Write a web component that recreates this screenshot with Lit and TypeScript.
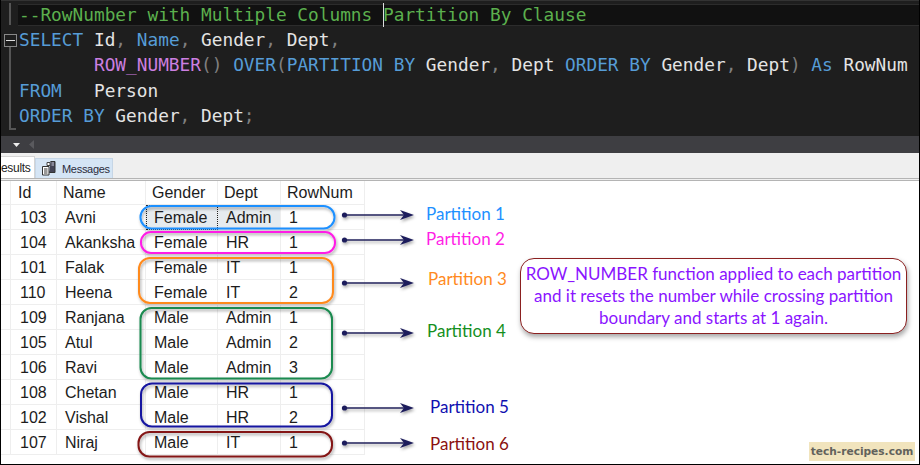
import { LitElement, html, css, svg } from "lit";
import { customElement } from "lit/decorators.js";

const ROWS = [
  ["103", "Avni", "Female", "Admin", "1"],
  ["104", "Akanksha", "Female", "HR", "1"],
  ["101", "Falak", "Female", "IT", "1"],
  ["110", "Heena", "Female", "IT", "2"],
  ["109", "Ranjana", "Male", "Admin", "1"],
  ["105", "Atul", "Male", "Admin", "2"],
  ["106", "Ravi", "Male", "Admin", "3"],
  ["108", "Chetan", "Male", "HR", "1"],
  ["102", "Vishal", "Male", "HR", "2"],
  ["107", "Niraj", "Male", "IT", "1"],
];
const HEAD = ["Id", "Name", "Gender", "Dept", "RowNum"];

const BOXES = [
  { x: 140.5, y: 206, w: 194, h: 22.5, r: 11, c: "#1e90ff" },
  { x: 141, y: 232, w: 194, h: 21, r: 10, c: "#ff1ee6" },
  { x: 139, y: 258, w: 194, h: 45, r: 11, c: "#ff8a1e" },
  { x: 140.5, y: 308, w: 191.5, h: 70.5, r: 11, c: "#1a8a50" },
  { x: 141, y: 383.5, w: 191, h: 43, r: 11, c: "#1616a0" },
  { x: 138.5, y: 432, w: 193.5, h: 24.5, r: 11, c: "#841818" },
];
const ARROWS = [215, 240, 283, 333, 408, 443];
const LABELS = [
  { t: "Partition 1", x: 426, y: 214, c: "#1e90ff" },
  { t: "Partition 2", x: 426, y: 239, c: "#ff1ee6" },
  { t: "Partition 3", x: 428, y: 279, c: "#ff8a1e" },
  { t: "Partition 4", x: 427, y: 331, c: "#158f1e" },
  { t: "Partition 5", x: 430, y: 407, c: "#1010b0" },
  { t: "Partition 6", x: 430, y: 444, c: "#8b1010" },
];

@customElement("app-root")
export class AppRoot extends LitElement {
  static styles = css`
    :host {
      display: block;
      position: relative;
      width: 920px;
      height: 465px;
      overflow: hidden;
      background: #fff;
      box-sizing: border-box;
      border-left: 1px solid #000;
      border-right: 1px solid #000;
      border-bottom: 1px solid #000;
      font-family: "Liberation Sans", Arial, sans-serif;
    }
    .editor {
      height: 136px;
      box-sizing: border-box;
      background: #1e1e1e;
      border-top: 1px solid #333;
      padding-top: 4px;
      display: flex;
      font-family: "DejaVu Sans Mono", monospace;
      font-size: 17.8px;
      color: #e4e4e4;
    }
    .gutter {
      width: 17px;
      flex: none;
      display: flex;
      flex-direction: column;
      align-items: flex-start;
      padding-left: 8px;
      box-sizing: border-box;
    }
    .g1 { width: 2px; height: 22px; margin-top: -2px; background: #555; }
    .fold {
      width: 13px;
      height: 13px;
      margin: 9px 0 0 -5px;
      box-sizing: border-box;
      border: 1px solid #888;
      display: flex;
      align-items: center;
      justify-content: center;
      flex: none;
    }
    .fold i { display: block; width: 9px; height: 1px; background: #ddd; }
    .g2 { width: 2px; height: 81px; background: #555; }
    .g3 { width: 7px; height: 2px; background: #555; }
    .code { flex: 1; min-width: 0; }
    .line {
      height: 25.4px;
      line-height: 25.4px;
      white-space: pre;
      padding-left: 1px;
    }
    .line.first {
      height: 20px;
      line-height: 19px;
      margin-bottom: 2px;
      background: #111;
      box-shadow: 0 1px 0 #2c2c2c, 0 -1px 0 #2c2c2c;
      position: relative;
    }
    .caret {
      position: absolute;
      left: 365px;
      top: -2px;
      width: 1px;
      height: 24px;
      background: #ddd;
    }
    .kw { color: #569cd6; }
    .cm { color: #5cb04e; }
    .fn { color: #cc7fe0; }
    .mut { color: #808080; }
    .scrollbar {
      height: 17px;
      background: #3e3e42;
      display: flex;
      align-items: center;
      padding-left: 12px;
      gap: 9px;
    }
    .tabs {
      height: 28px;
      box-sizing: border-box;
      background: #efefef;
      border-bottom: 3px double #b4b4b4;
      display: flex;
      align-items: flex-end;
      font-size: 11px;
      letter-spacing: -0.3px;
      color: #222;
    }
    .tab {
      display: flex;
      align-items: center;
      box-sizing: border-box;
    }
    .tab.on {
      width: 34px;
      height: 22px;
      background: #fff;
      border: 1px solid #d5d5d5;
      border-left: 0;
      border-bottom: 0;
      font-size: 12px;
      letter-spacing: -0.3px;
    }
    .tab.off {
      width: 78px;
      height: 20px;
      gap: 6px;
      padding-left: 5px;
      background: #d5e5f5;
      border: 1px solid #c6d6e6;
      border-bottom: 0;
      color: #2b2b3b;
    }
    .grid {
      display: grid;
      grid-template-columns: 10px 46px 89px 72px 63px 84px;
      grid-template-rows: 24px;
      grid-auto-rows: 25px;
      width: 364px;
      font-size: 16px;
      color: #1c1c1c;
    }
    .cell {
      box-sizing: border-box;
      border-right: 1px solid #eee;
      border-bottom: 1px solid #eee;
      padding: 1px 0 0 8px;
      display: flex;
      align-items: center;
      white-space: nowrap;
      min-width: 0;
    }
    .cell.id { padding-left: 9px; }
    .cell.h { padding-left: 6px; }
    .cell.h.id { padding-left: 7px; }
    .cell.rh { padding: 0; }
    .cell.sel { background: #e6ebef; }
    .cell.focus { outline: 1px dotted #222; outline-offset: -1px; }
    .overlay {
      position: absolute;
      left: -1px;
      top: 0;
      width: 920px;
      height: 465px;
      pointer-events: none;
    }
    .label {
      position: absolute;
      font-family: Lato, sans-serif;
      font-size: 17px;
      line-height: 20px;
      white-space: nowrap;
      transform: translateY(-50%);
    }
    .callout {
      position: absolute;
      left: 519px;
      top: 258px;
      width: 387px;
      height: 76px;
      box-sizing: border-box;
      background: #fff;
      border: 1.5px solid #8b2020;
      border-radius: 14px;
      box-shadow: 1px 3px 5px rgba(0, 0, 0, 0.35);
      color: #8a14ff;
      font-family: Lato, sans-serif;
      font-size: 17px;
      line-height: 22px;
      text-align: center;
      padding-top: 4px;
      white-space: nowrap;
    }
    .stamp {
      position: absolute;
      left: 808px;
      top: 442px;
      width: 106px;
      height: 19px;
      background: #f1e4bd;
      color: #62625c;
      font-family: "DejaVu Sans", sans-serif;
      font-weight: 700;
      font-size: 10.6px;
      line-height: 19px;
      text-align: center;
      white-space: nowrap;
    }
  `;

  private msgIcon() {
    return html`<svg width="15" height="15" viewBox="0 0 15 15">
      <path d="M1.500 5.500h6.500v8.500h-6.500z" fill="#fff" stroke="#333" />
      <path d="M3 8h3.500M3 10h3.500M3 12h3.500" stroke="#333" />
      <path d="M9.500 0.500h4.500v11h-5.500v-1" fill="#445" stroke="#333" />
      <path d="M6 1.500h3v3h-3z" fill="#fff" stroke="#444" />
      <path d="M10.500 2h2.500M10.500 4h2.500" stroke="#ccd" />
    </svg>`;
  }

  private overlay() {
    return svg`<svg class="overlay" viewBox="0 0 920 465">
      <defs>
        <filter id="sh" x="-20%" y="-50%" width="140%" height="220%">
          <feDropShadow dx="1" dy="2" stdDeviation="1.6" flood-color="#000" flood-opacity="0.35" />
        </filter>
      </defs>
      ${BOXES.map(
        (b) => svg`<rect x=${b.x} y=${b.y} width=${b.w} height=${b.h} rx=${b.r}
          fill="none" stroke=${b.c} stroke-width="2" filter="url(#sh)" />`
      )}
      ${ARROWS.map(
        (y) => svg`<g filter="url(#sh)">
          <circle cx="344.500" cy=${y} r="2.600" fill="#1f1f5c" />
          <path d="M344 ${y}H404" stroke="#1f1f5c" stroke-width="1.300" />
          <path d="M400 ${y - 5}L414 ${y}L400 ${y + 5}L404 ${y}Z" fill="#1f1f5c" />
        </g>`
      )}
    </svg>`;
  }

  render() {
    return html`
      <div class="editor">
        <div class="gutter">
          <div class="g1"></div>
          <div class="fold"><i></i></div>
          <div class="g2"></div>
          <div class="g3"></div>
        </div>
        <div class="code">
          <div class="line first"><span class="cm">--RowNumber with Multiple Columns Partition By Clause</span><span class="caret"></span></div>
          <div class="line"><span class="kw">SELECT</span> Id<span class="mut">,</span> <span class="kw">Name</span><span class="mut">,</span> Gender<span class="mut">,</span> Dept<span class="mut">,</span></div>
          <div class="line">       <span class="fn">ROW_NUMBER</span><span class="mut">()</span> <span class="kw">OVER</span><span class="mut">(</span><span class="kw">PARTITION BY</span> Gender<span class="mut">,</span> Dept <span class="kw">ORDER BY</span> Gender<span class="mut">,</span> Dept<span class="mut">)</span> <span class="kw">As</span> RowNum</div>
          <div class="line"><span class="kw">FROM</span>   Person</div>
          <div class="line"><span class="kw">ORDER BY</span> Gender<span class="mut">,</span> Dept<span class="mut">;</span></div>
        </div>
      </div>
      <div class="scrollbar">
        <svg width="7" height="4" viewBox="0 0 7 4"><path d="M0 0h7L3.500 4z" fill="#eee" /></svg>
        <svg width="5" height="9" viewBox="0 0 5 9"><path d="M5 0v9L0 4.500z" fill="#5a5a5e" /></svg>
      </div>
      <div class="tabs">
        <div class="tab on">esults</div>
        <div class="tab off">${this.msgIcon()}<span>Messages</span></div>
      </div>
      <div class="grid">
        <div class="cell rh"></div>
        ${HEAD.map((h, j) => html`<div class="cell h ${j === 0 ? "id" : ""}">${h}</div>`)}
        ${ROWS.map(
          (r, i) => html`
            <div class="cell rh"></div>
            ${r.map(
              (v, j) => html`<div
                class="cell ${j === 0 ? "id" : ""} ${i === 0 && (j === 2 || j === 3) ? "sel" : ""} ${i === 0 && j === 2 ? "focus" : ""}"
              >${v}</div>`
            )}
          `
        )}
      </div>
      ${this.overlay()}
      ${LABELS.map(
        (l) => html`<div class="label" style="left:${l.x - 1}px;top:${l.y}px;color:${l.c}">${l.t}</div>`
      )}
      <div class="callout">
        ROW_NUMBER function applied to each partition<br />
        and it resets the number while crossing partition<br />
        boundary and starts at 1 again.
      </div>
      <div class="stamp">tech-recipes.com</div>
    `;
  }
}
